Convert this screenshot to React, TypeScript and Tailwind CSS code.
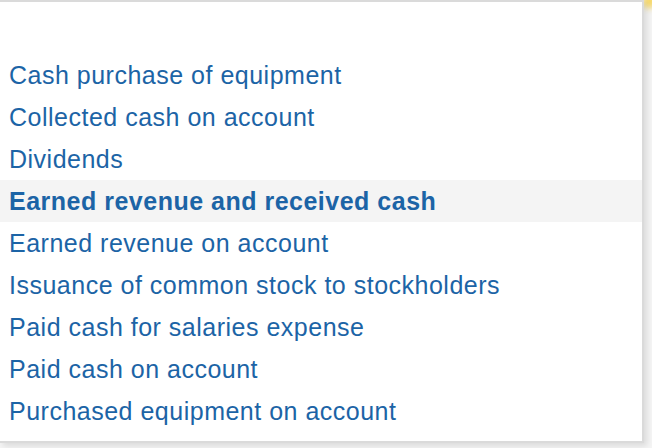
import React from 'react';

const OPTIONS = [
  'Cash purchase of equipment',
  'Collected cash on account',
  'Dividends',
  'Earned revenue and received cash',
  'Earned revenue on account',
  'Issuance of common stock to stockholders',
  'Paid cash for salaries expense',
  'Paid cash on account',
  'Purchased equipment on account',
];

const SELECTED = 'Earned revenue and received cash';

export default function App() {
  return (
    <div className="relative w-[652px] h-[448px] overflow-hidden bg-[#f4f4f4]">
      {/* yellow glow from whatever sits behind the menu */}
      <div className="absolute -right-[6px] -top-[6px] w-[16px] h-[14px] rounded-full bg-[#f6d86a] blur-[3px]" />

      <div
        className="relative w-[644px] h-[443px] bg-white border-t-2 border-r-2 border-b-2 border-[#dadada] shadow-[3px_3px_6px_rgba(0,0,0,0.10)] pt-[52px]"
        style={{ fontFamily: '"Liberation Sans", Arial, Helvetica, sans-serif' }}
      >
        <ul>
          {OPTIONS.map((o) => (
            <li
              key={o}
              className={`h-[42px] pl-[9px] leading-[42px] text-[25px] tracking-[0.5px] text-[#1c64a6] whitespace-nowrap ${
                o === SELECTED ? 'bg-[#f4f4f4] font-bold' : ''
              }`}
            >
              {o}
            </li>
          ))}
        </ul>
      </div>
    </div>
  );
}
